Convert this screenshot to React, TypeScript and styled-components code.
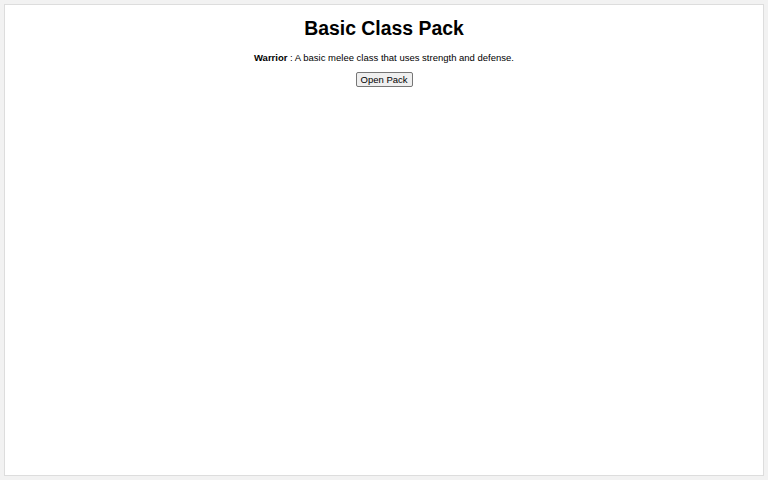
import styled, { createGlobalStyle } from "styled-components";

const GlobalStyle = createGlobalStyle`
  html, body {
    margin: 0;
    height: 100%;
    background: #f2f2f2;
  }
  #root {
    height: 100%;
  }
`;

const Page = styled.div`
  box-sizing: border-box;
  height: 100%;
  padding: 4px;
  font-family: "Liberation Sans", Arial, sans-serif;
  font-size: 10px;
  color: #000;
`;

const Card = styled.div`
  box-sizing: border-box;
  height: 100%;
  background: #fff;
  border: 1px solid #ddd;
  display: flex;
  flex-direction: column;
  align-items: center;
  padding-top: 12px;
`;

const Title = styled.h1`
  margin: 0;
  font-size: 19.4px;
  font-weight: bold;
  line-height: 22px;
`;

const Description = styled.p`
  margin: 13px 0 0;
  font-size: 9.5px;
  line-height: 11px;

  strong {
    font-weight: bold;
  }
`;

const OpenButton = styled.button`
  margin-top: 9px;
  font-family: "Liberation Sans", Arial, sans-serif;
  font-size: 9.5px;
  line-height: 11px;
  padding: 1px 4px;
  background: #efefef;
  border: 1px solid #767676;
  border-radius: 2px;
  color: #000;
`;

const App = () => {
  return (
    <Page>
      <GlobalStyle />
      <Card>
        <Title>Basic Class Pack</Title>
        <Description>
          <strong>Warrior</strong> : A basic melee class that uses strength and defense.
        </Description>
        <OpenButton>Open Pack</OpenButton>
      </Card>
    </Page>
  );
};

export default App;
